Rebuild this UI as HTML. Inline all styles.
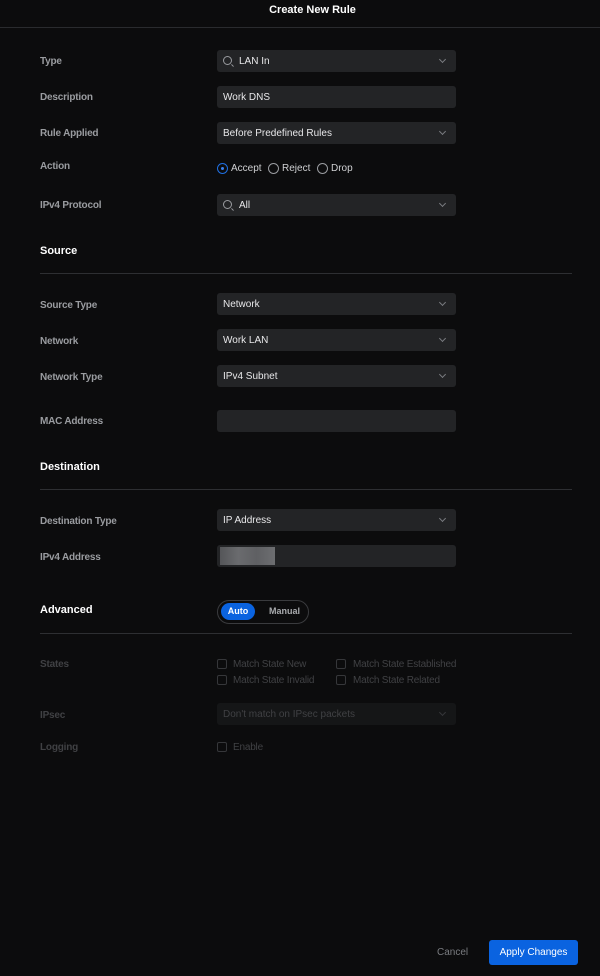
<!DOCTYPE html>
<html><head><style>
*{margin:0;padding:0;box-sizing:border-box}
body{width:600px;height:976px;background:#0c0c0d;font-family:"Liberation Sans",sans-serif;color:#e6e6e8;position:relative;overflow:hidden;font-size:10px}
.a{position:absolute}
.lbl{position:absolute;left:40px;font-size:10px;color:#9a9ca0;font-weight:bold;letter-spacing:-0.2px}
.dim{color:#404144}
.in{position:absolute;left:217px;width:239px;height:22px;background:#232426;border-radius:3px;font-size:10px;color:#e8e8ea;padding:6px 0 0 6px}
.in.s{padding-left:22px}
.chev{position:absolute;right:11px;top:7px;width:5px;height:5px;border-right:1px solid #7a7c80;border-bottom:1px solid #7a7c80;transform:rotate(45deg)}
.mag{position:absolute;left:6px;top:6px;width:9px;height:9px;border:1px solid #9a9ca0;border-radius:50%}
.mag:after{content:"";position:absolute;left:7px;top:8px;width:3px;height:1px;background:#9a9ca0;transform:rotate(45deg)}
.h{position:absolute;left:40px;font-size:11px;font-weight:bold;color:#fff}
.line{position:absolute;left:40px;width:532px;height:1px;background:#2e2f32}
.rad{position:absolute;width:11px;height:11px;border:1px solid #9a9ca0;border-radius:50%}
.cb{position:absolute;width:10px;height:10px;border:1px solid #36373a;border-radius:2px}
.ct{position:absolute;font-size:10px;color:#404144;letter-spacing:-0.2px}
</style></head><body>
<div class="a" style="left:0;top:4px;width:625px;text-align:center;font-size:11px;font-weight:bold;color:#fff">Create New Rule</div>
<div class="a" style="left:0;top:27px;width:600px;height:1px;background:#2a2b2e"></div>

<div class="lbl" style="top:56px">Type</div>
<div class="in s" style="top:50px"><span class="mag"></span>LAN In<span class="chev"></span></div>
<div class="lbl" style="top:92px">Description</div>
<div class="in" style="top:86px">Work DNS</div>
<div class="lbl" style="top:128px">Rule Applied</div>
<div class="in" style="top:122px">Before Predefined Rules<span class="chev"></span></div>
<div class="lbl" style="top:161px">Action</div>
<div class="rad" style="left:217px;top:163px;border-color:#1f6fe0"><div style="position:absolute;left:3px;top:3px;width:3px;height:3px;border-radius:50%;background:#3b82f0"></div></div>
<div class="a" style="left:231px;top:163px;color:#cfd0d2">Accept</div>
<div class="rad" style="left:268px;top:163px"></div>
<div class="a" style="left:282px;top:163px;color:#cfd0d2">Reject</div>
<div class="rad" style="left:317px;top:163px"></div>
<div class="a" style="left:331px;top:163px;color:#cfd0d2">Drop</div>
<div class="lbl" style="top:200px">IPv4 Protocol</div>
<div class="in s" style="top:194px"><span class="mag"></span>All<span class="chev"></span></div>

<div class="h" style="top:245px">Source</div>
<div class="line" style="top:273px"></div>
<div class="lbl" style="top:300px">Source Type</div>
<div class="in" style="top:293px">Network<span class="chev"></span></div>
<div class="lbl" style="top:336px">Network</div>
<div class="in" style="top:329px">Work LAN<span class="chev"></span></div>
<div class="lbl" style="top:372px">Network Type</div>
<div class="in" style="top:365px">IPv4 Subnet<span class="chev"></span></div>
<div class="lbl" style="top:416px">MAC Address</div>
<div class="in" style="top:410px"></div>

<div class="h" style="top:461px">Destination</div>
<div class="line" style="top:489px"></div>
<div class="lbl" style="top:516px">Destination Type</div>
<div class="in" style="top:509px">IP Address<span class="chev"></span></div>
<div class="lbl" style="top:552px">IPv4 Address</div>
<div class="in" style="top:545px;padding:0"><div style="position:absolute;left:3px;top:2px;width:55px;height:18px;background:linear-gradient(90deg,#555659,#6a6b6e,#5f6063,#6d6e71)"></div></div>

<div class="h" style="top:604px">Advanced</div>
<div class="a" style="left:217px;top:600px;width:92px;height:24px;border:1px solid #3a3b3e;border-radius:12px"></div>
<div class="a" style="left:221px;top:603px;width:34px;height:17px;background:#0a63e0;border-radius:9px;color:#fff;font-size:9px;font-weight:bold;text-align:center;line-height:17px">Auto</div>
<div class="a" style="left:269px;top:606px;font-size:9px;font-weight:bold;color:#a9abae">Manual</div>
<div class="line" style="top:633px"></div>

<div class="lbl dim" style="top:659px">States</div>
<div class="cb" style="left:217px;top:659px"></div><div class="ct" style="left:233px;top:659px">Match State New</div>
<div class="cb" style="left:336px;top:659px"></div><div class="ct" style="left:353px;top:659px">Match State Established</div>
<div class="cb" style="left:217px;top:675px"></div><div class="ct" style="left:233px;top:675px">Match State Invalid</div>
<div class="cb" style="left:336px;top:675px"></div><div class="ct" style="left:353px;top:675px">Match State Related</div>
<div class="lbl dim" style="top:710px">IPsec</div>
<div class="in" style="top:703px;background:#151617;color:#404144">Don't match on IPsec packets<span class="chev" style="border-color:#36373a"></span></div>
<div class="lbl dim" style="top:742px">Logging</div>
<div class="cb" style="left:217px;top:742px"></div><div class="ct" style="left:233px;top:742px">Enable</div>

<div class="a" style="left:437px;top:947px;color:#7a7c80">Cancel</div>
<div class="a" style="left:489px;top:940px;width:89px;height:25px;background:#0a63e0;border-radius:3px;color:#fff;font-size:10px;text-align:center;line-height:25px">Apply Changes</div>
</body></html>
